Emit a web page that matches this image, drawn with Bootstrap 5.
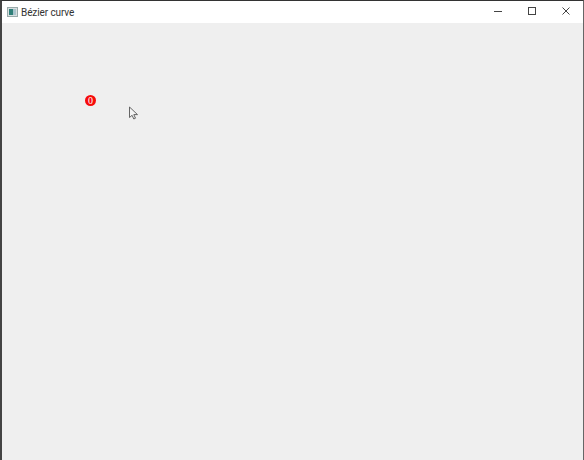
<!DOCTYPE html>
<html lang="en">
<head>
<meta charset="utf-8">
<title>Bézier curve</title>
<link href="https://cdn.jsdelivr.net/npm/bootstrap@5.3.0/dist/css/bootstrap.min.css" rel="stylesheet">
<style>
html,body{height:100%;margin:0;background:#eee;overflow:hidden}
.app-win{height:460px;width:584px;border-top:1px solid #333;border-left:2px solid #444;border-right:1px solid #666;background:#efefef;font-family:"Roboto","Liberation Sans",sans-serif}
.app-bar{height:22px;background:#fff;padding-left:5px;color:#333;font-size:10px;letter-spacing:-.1px;line-height:22px}
.app-bar svg{display:block}
.app-title{margin-left:-1px;padding-top:1px}
.win-ctl{width:34px;height:22px;display:flex;align-items:center;justify-content:center}
.app-canvas{position:relative;background:#efefef}
.pt-node{position:absolute;left:83px;top:72px;width:11px;height:11px;border-radius:50%;background:#f60b0b;color:#fff;font:10px/12px "Liberation Serif",serif;text-align:center}
.pt-cursor{position:absolute;left:126px;top:83px}
</style>
</head>
<body>
<div class="app-win d-flex flex-column">
  <div class="app-bar d-flex align-items-center flex-shrink-0">
    <svg width="11" height="10" viewBox="0 0 11 10" class="me-1"><rect x=".5" y=".5" width="10" height="9" fill="#d8dfe0" stroke="#9aa"/><rect x="2" y="2" width="4" height="6" fill="#2f7f78"/><rect x="6" y="2" width="3" height="6" fill="#a9c4cc"/></svg>
    <span class="app-title">Bézier curve</span>
    <div class="d-flex ms-auto">
      <div class="win-ctl"><svg width="10" height="10" viewBox="0 0 10 10"><path d="M1 4.5h8" stroke="#444" fill="none"/></svg></div>
      <div class="win-ctl"><svg width="10" height="10" viewBox="0 0 10 10"><rect x="1.5" y=".5" width="7" height="7" stroke="#444" fill="none"/></svg></div>
      <div class="win-ctl"><svg width="10" height="10" viewBox="0 0 10 10"><path d="M1.5 .5l7 7M8.5 .5l-7 7" stroke="#444" fill="none"/></svg></div>
    </div>
  </div>
  <div class="app-canvas flex-grow-1">
    <div class="pt-node">0</div>
    <svg class="pt-cursor" width="12" height="14" viewBox="0 0 12 14"><path d="M1.5 1v10.5l2.6-2.2 1.7 3.7 1.7-.8-1.7-3.6H9.5z" fill="#f4f4f4" stroke="#555" stroke-width=".9"/></svg>
  </div>
</div>
</body>
</html>
